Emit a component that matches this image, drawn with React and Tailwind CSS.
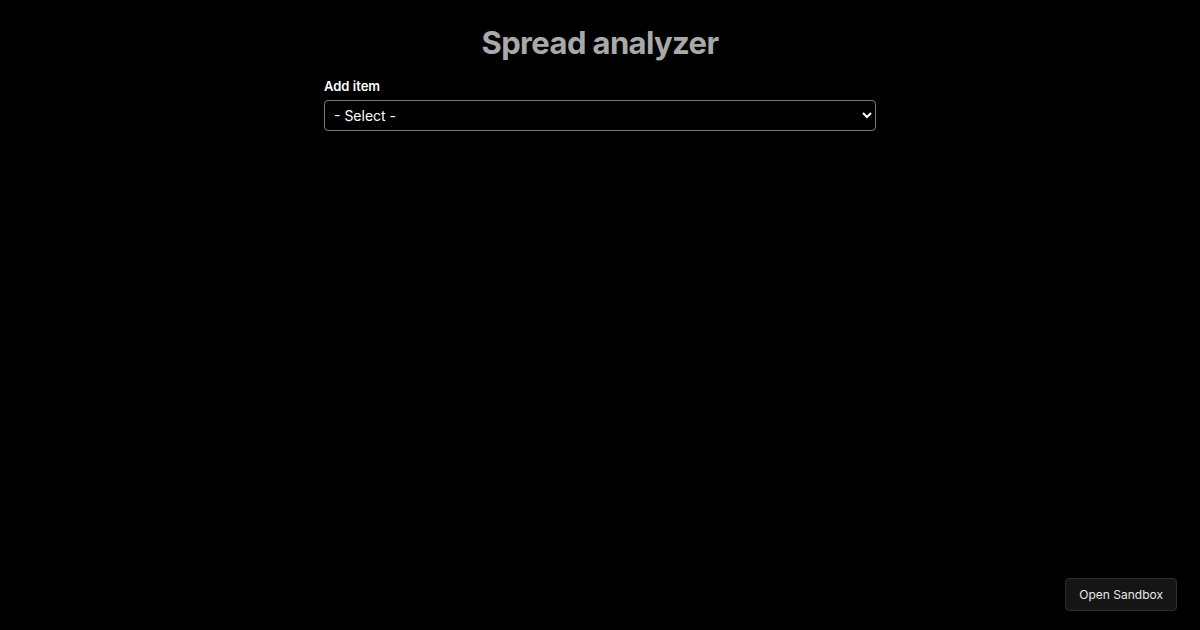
import React, { useState } from 'react';

export default function App() {
	const [item, setItem] = useState('');

	return (
		<div className="min-h-screen w-full bg-black text-white font-['Inter',sans-serif] [color-scheme:dark]">
			<div className="mx-auto w-[552px] pt-[22px]">
				<h1 className="text-center text-[31px] leading-[42px] font-bold tracking-[-0.02em] text-[#a9a9a9]">
					Spread analyzer
				</h1>
				<div className="mt-[14px]">
					<label className="block text-[13px] leading-[17px] font-semibold text-white">Add item</label>
					<select
						value={item}
						onChange={(e) => setItem(e.target.value)}
						className="mt-[5px] block h-[31px] w-full rounded-[4px] border border-[#7a7a7a] bg-black px-[5px] text-[14px] text-white"
					>
						<option value="">- Select -</option>
						<option value="a">Item A</option>
						<option value="b">Item B</option>
					</select>
				</div>
			</div>

			<button
				type="button"
				className="fixed bottom-[19px] right-[23px] h-[33px] rounded-[4px] border border-[#2e2e2e] bg-[#151515] px-[13px] text-[12px] text-[#e8e8e8]"
			>
				Open Sandbox
			</button>
		</div>
	);
}
